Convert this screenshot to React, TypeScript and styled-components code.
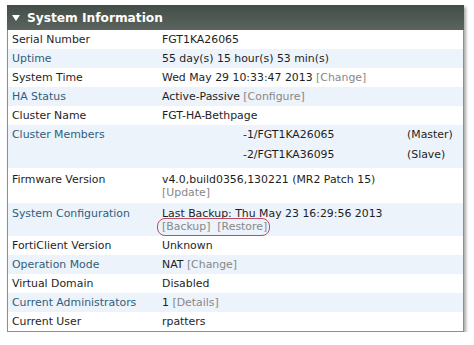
import React from "react";
import styled, { createGlobalStyle } from "styled-components";

const Global = createGlobalStyle`
  html, body { margin: 0; padding: 0; background: #ffffff; }
  body { font-family: "DejaVu Sans", Verdana, sans-serif; }
`;

const Page = styled.div`
  padding: 5px 0 0 7px;
`;

const Panel = styled.div`
  width: 455px;
  border: 1px solid #8e8e8e;
  border-top: none;
  background: #ffffff;
  box-shadow: 2px 2px 3px rgba(0, 0, 0, 0.35);
`;

const Header = styled.div`
  height: 25px;
  display: flex;
  align-items: center;
  gap: 7px;
  padding-left: 5px;
  margin: 0 -1px;
  background: linear-gradient(#434d48, #5b645f);
  color: #ffffff;
  font-size: 12.2px;
  font-weight: bold;
`;

const Row = styled.div<{ $alt?: boolean; $pad?: number }>`
  display: grid;
  grid-template-columns: 150px 1fr;
  padding: ${(p) => p.$pad ?? 3}px 0 ${(p) => p.$pad ?? 3}px 4px;
  background: ${(p) => (p.$alt ? "#edf3fa" : "#ffffff")};
  font-size: 10.9px;
  line-height: 13px;
  color: #1e1e1e;
`;

const Label = styled.div<{ $alt?: boolean }>`
  color: ${(p) => (p.$alt ? "#2d5e7c" : "#1e1e1e")};
`;

const Value = styled.div`
  min-height: 13px;
`;

const Link = styled.span`
  color: #888888;
`;

const Members = styled.div`
  display: grid;
  grid-template-columns: 164px auto;
  padding-left: 81px;
  row-gap: 7px;
  padding-bottom: 4px;
`;

const Circled = styled.span`
  position: relative;
  &::after {
    content: "";
    position: absolute;
    left: -5px;
    right: -3px;
    top: -2px;
    bottom: -3px;
    border: 1px solid #c24a5e;
    border-radius: 8px;
  }
`;

const Arrow = () => (
  <svg width="8" height="6" viewBox="0 0 8 6">
    <path d="M0 0 L8 0 L4 6 Z" fill="#ffffff" />
  </svg>
);

export default function App() {
  return (
    <>
      <Global />
      <Page>
        <Panel>
          <Header>
            <Arrow />
            <span>System Information</span>
          </Header>
          <Row>
            <Label>Serial Number</Label>
            <Value>FGT1KA26065</Value>
          </Row>
          <Row $alt>
            <Label $alt>Uptime</Label>
            <Value>55 day(s) 15 hour(s) 53 min(s)</Value>
          </Row>
          <Row>
            <Label>System Time</Label>
            <Value>
              Wed May 29 10:33:47 2013 <Link>[Change]</Link>
            </Value>
          </Row>
          <Row $alt>
            <Label $alt>HA Status</Label>
            <Value>
              Active-Passive <Link>[Configure]</Link>
            </Value>
          </Row>
          <Row>
            <Label>Cluster Name</Label>
            <Value>FGT-HA-Bethpage</Value>
          </Row>
          <Row $alt>
            <Label $alt>Cluster Members</Label>
            <Members>
              <span>-1/FGT1KA26065</span>
              <span>(Master)</span>
              <span>-2/FGT1KA36095</span>
              <span>(Slave)</span>
            </Members>
          </Row>
          <Row $pad={4.5}>
            <Label>Firmware Version</Label>
            <Value>
              v4.0,build0356,130221 (MR2 Patch 15)
              <br />
              <Link>[Update]</Link>
            </Value>
          </Row>
          <Row $alt $pad={3.5}>
            <Label $alt>System Configuration</Label>
            <Value>
              Last Backup: Thu May 23 16:29:56 2013
              <br />
              <Circled>
                <Link>[Backup]</Link>&nbsp; <Link>[Restore]</Link>
              </Circled>
            </Value>
          </Row>
          <Row>
            <Label>FortiClient Version</Label>
            <Value>Unknown</Value>
          </Row>
          <Row $alt>
            <Label $alt>Operation Mode</Label>
            <Value>
              NAT <Link>[Change]</Link>
            </Value>
          </Row>
          <Row>
            <Label>Virtual Domain</Label>
            <Value>Disabled</Value>
          </Row>
          <Row $alt>
            <Label $alt>Current Administrators</Label>
            <Value>
              1 <Link>[Details]</Link>
            </Value>
          </Row>
          <Row>
            <Label>Current User</Label>
            <Value>rpatters</Value>
          </Row>
        </Panel>
      </Page>
    </>
  );
}
